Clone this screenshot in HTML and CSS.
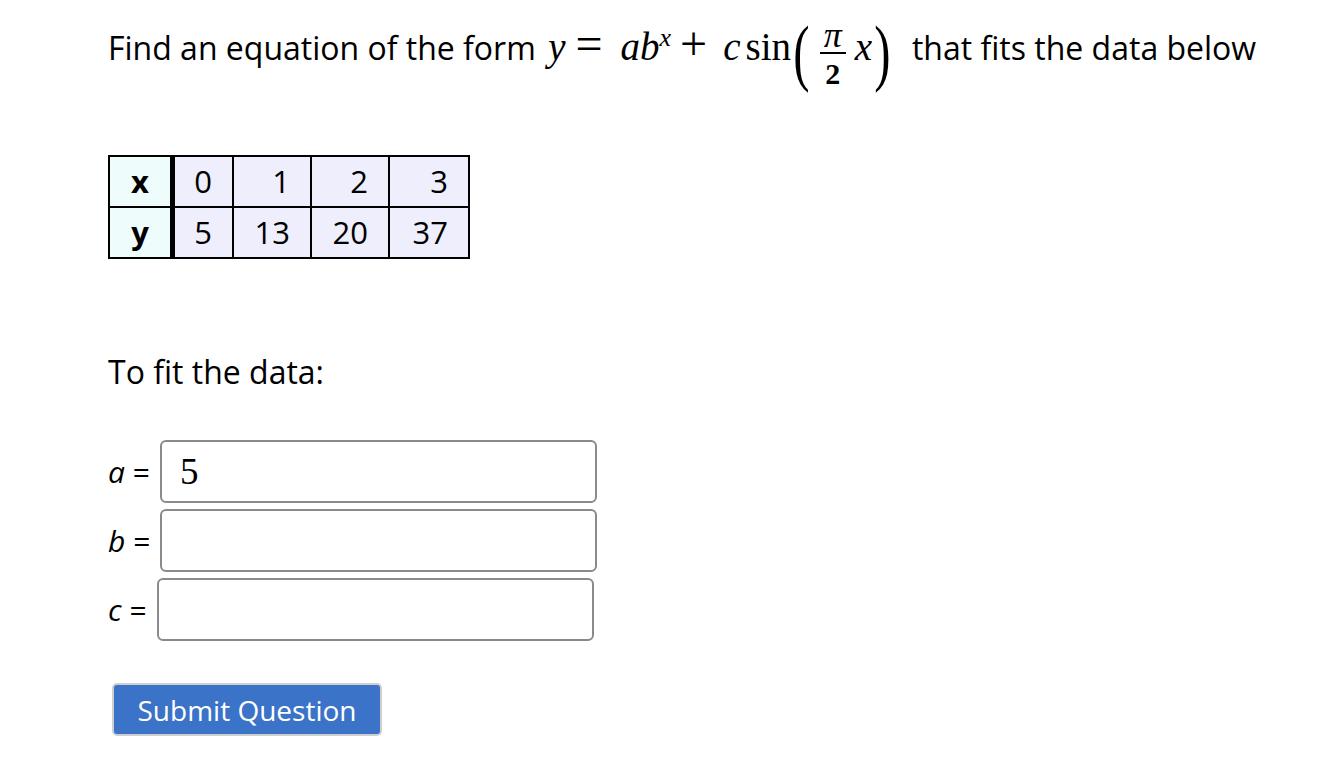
FILE: index.html
```html
<!DOCTYPE html>
<html>
<head>
<meta charset="utf-8">
<link rel="stylesheet" href="styles.css">
</head>
<body>
<div class="page">
  <p class="prompt">Find an equation of the form <span class="math"><i class="my">y</i><span class="op eq">=</span><i>a</i><i>b</i><sup><i>x</i></sup><span class="op plus">+</span><i>c</i><span class="fn">sin</span><span class="paren lp">(</span><span class="frac"><span class="num"><i>π</i></span><span class="den">2</span></span><i class="fx">x</i><span class="paren rp">)</span></span> that fits the data below</p>

  <table class="data">
    <tr><th>x</th><td>0</td><td>1</td><td>2</td><td>3</td></tr>
    <tr><th>y</th><td>5</td><td>13</td><td>20</td><td>37</td></tr>
  </table>

  <p class="fit">To fit the data:</p>

  <div class="answers">
    <div class="ans-row"><span class="lbl"><i>a</i> =</span><div class="box"><span class="val">5</span></div></div>
    <div class="ans-row"><span class="lbl"><i>b</i> =</span><div class="box"></div></div>
    <div class="ans-row narrow"><span class="lbl"><i>c</i> =</span><div class="box"></div></div>
  </div>

  <button class="submit">Submit Question</button>
</div>
</body>
</html>
```

FILE: styles.css
```css
html, body { margin: 0; padding: 0; background: #fff; }
body { font-family: "Open Sans", "Noto Sans", sans-serif; color: #000; }
.page { padding: 18px 0 0 108px; }

.prompt { margin: 0; font-size: 32px; line-height: 40px; height: 51px; white-space: nowrap; }
.math { font-family: "Liberation Serif", "DejaVu Serif", serif; font-size: 39px; line-height: 0; margin: 0 12px 0 4px; }
.math i { font-style: italic; }
.math .op { font-style: normal; font-size: 48px; line-height: 0; }
.math .eq { margin: 0 18px 0 10px; }
.math .plus { margin: 0 16px 0 9px; }
.math sup { font-size: 26px; line-height: 0; vertical-align: 14px; margin-left: 0; }
.math .fn { margin-left: 5px; }
.math .paren { display: inline-block; font-size: 74px; line-height: 0; font-weight: 300; vertical-align: -17px; transform: scaleX(0.66); margin: 0 -3px 0 -2px; }
.frac { display: inline-flex; flex-direction: column; align-items: center; vertical-align: 13px; margin: 0 4px 0 9px; }
.frac .num { padding: 0 4px; border-bottom: 2px solid #000; font-size: 36px; line-height: 34px; }
.frac .den { padding-top: 5px; font-weight: bold; font-size: 30px; line-height: 30px; font-style: normal; }
.fx { margin-left: 5px; }

.data { border-collapse: collapse; margin-top: 86px; font-size: 31px; }
.data th, .data td { border: 2px solid #000; height: 49px; padding: 0 20px 0 8px; text-align: right; line-height: 1; }
.data th { background: #effcfc; width: 30px; padding: 0 15px; text-align: center; border-right: 5px solid #000; font-weight: bold; }
.data td { background: #eeeefc; }
.data tr td:nth-child(2) { width: 29px; }
.data tr td:nth-child(3) { width: 48px; }
.data tr td:nth-child(4) { width: 48px; }
.data tr td:nth-child(5) { width: 50px; }

.fit { margin: 91px 0 0; font-size: 32px; line-height: 44px; }

.answers { margin-top: 46px; display: flex; flex-direction: column; gap: 6px; }
.ans-row { display: flex; align-items: center; font-size: 30px; }
.lbl { width: 52px; white-space: nowrap; }
.lbl i { font-style: italic; }
.box { border: 2px solid #8a8a8a; border-radius: 6px; display: flex; align-items: center; padding-left: 18px; box-sizing: border-box; width: 437px; height: 63px; }
.narrow .lbl { width: 49px; }
.val { font-family: "Liberation Serif", "DejaVu Serif", serif; font-size: 37px; line-height: 1; }

.submit { display: block; margin: 42px 0 0 4px; width: 270px; height: 53px; background: #3b73c9; color: #fff; border: 2px solid #cfcfcf; border-radius: 5px; font-family: "Open Sans", "Noto Sans", sans-serif; font-size: 28px; line-height: 1; padding: 0; }
```
